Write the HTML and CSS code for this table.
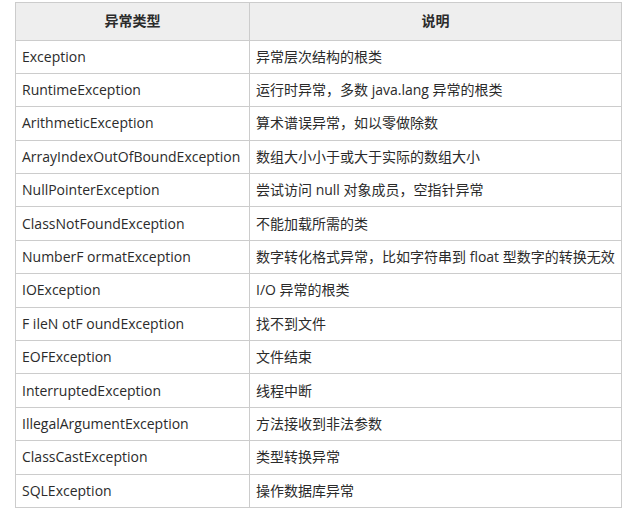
FILE: index.html
```html
<!DOCTYPE html>
<html lang="zh-CN">
<head>
<meta charset="utf-8">
<title>异常类型</title>
<link rel="stylesheet" href="styles.css">
</head>
<body>
<div class="page">
<table class="ex-table">
  <thead>
    <tr><th class="col-type">异常类型</th><th>说明</th></tr>
  </thead>
  <tbody>
    <tr><td>Exception</td><td>异常层次结构的根类</td></tr>
    <tr><td>RuntimeException</td><td>运行时异常，多数 java.lang 异常的根类</td></tr>
    <tr><td>ArithmeticException</td><td>算术谱误异常，如以零做除数</td></tr>
    <tr><td>ArrayIndexOutOfBoundException</td><td>数组大小小于或大于实际的数组大小</td></tr>
    <tr><td>NullPointerException</td><td>尝试访问 null 对象成员，空指针异常</td></tr>
    <tr><td>ClassNotFoundException</td><td>不能加载所需的类</td></tr>
    <tr><td>NumberF ormatException</td><td>数字转化格式异常，比如字符串到 float 型数字的转换无效</td></tr>
    <tr><td>IOException</td><td>I/O 异常的根类</td></tr>
    <tr><td>F ileN otF oundException</td><td>找不到文件</td></tr>
    <tr><td>EOFException</td><td>文件结束</td></tr>
    <tr><td>InterruptedException</td><td>线程中断</td></tr>
    <tr><td>IllegalArgumentException</td><td>方法接收到非法参数</td></tr>
    <tr><td>ClassCastException</td><td>类型转换异常</td></tr>
    <tr><td>SQLException</td><td>操作数据库异常</td></tr>
  </tbody>
</table>
</div>
</body>
</html>
```
FILE: styles.css
```css
html, body {
  margin: 0;
  padding: 0;
  background: #ffffff;
}
.page {
  padding: 2px 0 0 15px;
}
.ex-table {
  border-collapse: collapse;
  width: 607px;
  table-layout: fixed;
  font-family: "Open Sans", "Noto Sans CJK SC", sans-serif;
  font-size: 14px;
  color: #2b2b2b;
}
.ex-table th,
.ex-table td {
  border: 1px solid #cccccc;
  padding: 0 6px;
  text-align: left;
  white-space: nowrap;
  line-height: 20px;
}
.ex-table th {
  background: #eeeeee;
  font-weight: bold;
  text-align: center;
  height: 36.5px;
}
.ex-table td {
  height: 32.4px;
}
.col-type {
  width: 221px;
}
```
